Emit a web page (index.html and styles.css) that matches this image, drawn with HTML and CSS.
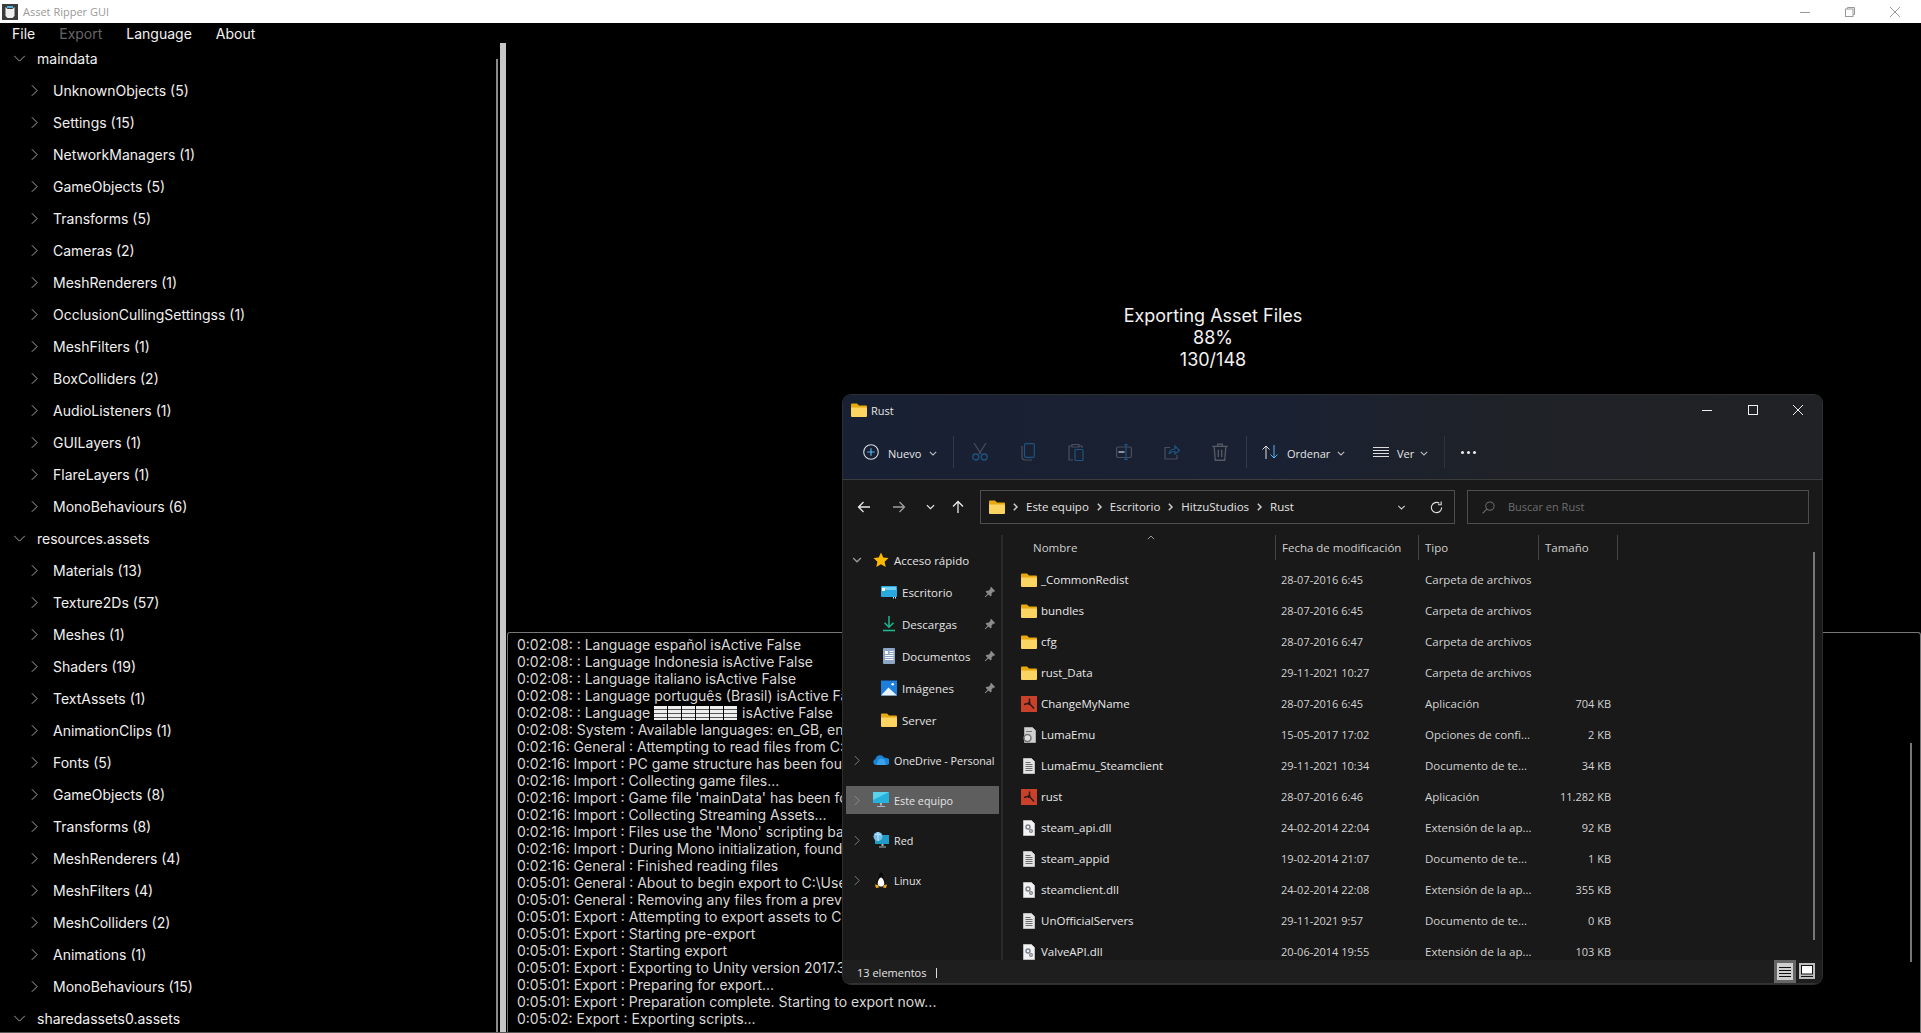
FILE: index.html
```html
<!DOCTYPE html>
<html>
	<head>
		<meta charset="UTF-8">
		<title>Asset Ripper GUI</title>
		<link rel="stylesheet" href="styles.css">
	</head>
	<body>
		<svg class="sprite" xmlns="http://www.w3.org/2000/svg">
			<symbol id="chev-r" viewBox="0 0 8 14"><path d="M1 1l6 6-6 6" fill="none" stroke="currentColor" stroke-width="1"/></symbol>
			<symbol id="chev-d" viewBox="0 0 14 8"><path d="M1 1l6 6 6-6" fill="none" stroke="currentColor" stroke-width="1"/></symbol>
			<symbol id="mini-d" viewBox="0 0 8 5"><path d="M.8.8L4 4l3.200-3.200" fill="none" stroke="currentColor" stroke-width="1.100"/></symbol>
			<symbol id="mini-r" viewBox="0 0 5 8"><path d="M.8.8L4 4 .8 7.200" fill="none" stroke="currentColor" stroke-width="1.500"/></symbol>
			<symbol id="folder" viewBox="0 0 16 14"><path d="M0 1.500Q0 .5 1 .5h5l2 2h7q1 0 1 1V6H0z" fill="#e8a90e"/><path d="M0 4.500h15q1 0 1 1V13q0 1-1 1H1q-1 0-1-1z" fill="#fcd462"/></symbol>
			<symbol id="app" viewBox="0 0 16 16"><rect width="16" height="16" fill="#c9402b"/><path d="M8.500 2.500v4.500M3 8.500l5-1.500 5 5.500" fill="none" stroke="#2a1a18" stroke-width="1.500"/><circle cx="8" cy="7.500" r="1.500" fill="#2a1a18"/></symbol>
			<symbol id="doc" viewBox="0 0 12 16"><path d="M.5.5h8l3 3v12H.5z" fill="#e4e4e4" stroke="#bdbdbd"/><path d="M2.500 4.500h5M2.500 6.500h7M2.500 8.500h7M2.500 10.500h7M2.500 12.500h7" stroke="#6c6c6c"/></symbol>
			<symbol id="dll" viewBox="0 0 12 16"><path d="M.5.5h8l3 3v12H.5z" fill="#f2f2f2" stroke="#bdbdbd"/><circle cx="5" cy="7" r="2" fill="none" stroke="#77808a" stroke-width="1.400"/><circle cx="8" cy="11" r="1.400" fill="none" stroke="#77808a" stroke-width="1.200"/></symbol>
			<symbol id="conf" viewBox="0 0 14 16"><path d="M2.500.5h8l3 3v12h-11z" fill="#d0d0d0" stroke="#aaa"/><circle cx="5.500" cy="11" r="3.500" fill="#e0e0e0" stroke="#777" stroke-width="1.500"/><path d="M4 4.500h6" stroke="#777"/></symbol>
			<symbol id="star" viewBox="0 0 16 16"><path d="M8 .5l2.300 5 5.200.6-3.900 3.600 1.100 5.300L8 12.300 3.300 15l1.100-5.300L.5 6.100l5.200-.6z" fill="#fcb900"/></symbol>
			<symbol id="pin" viewBox="0 0 12 12"><path d="M7 .8l4.200 4.200-1 .8-.7-.3-2 2 .1 1.900-1 1-2-2L1.300 11.300l-.6-.6L3.600 7.700l-2-2 1-1 1.900.1 2-2-.3-.7z" fill="#8c8c8c"/></symbol>
			<symbol id="desk" viewBox="0 0 16 14"><rect y="1" width="16" height="11" rx="1" fill="#2aa8e0"/><rect x="1" y="2" width="14" height="3" fill="#6fd2f4"/><rect x="1" y="3" width="3" height="3" fill="#fff"/><rect x="12" y="12" width="1" height="1.500" fill="#ddd"/><rect x="14" y="12" width="1" height="1.500" fill="#ddd"/></symbol>
			<symbol id="down" viewBox="0 0 14 16"><path d="M7 0v11M2.500 6.800L7 11.300l4.500-4.500" fill="none" stroke="#1fb58f" stroke-width="1.500"/><path d="M1 14.500h12" stroke="#1fb58f" stroke-width="1.600"/></symbol>
			<symbol id="docs" viewBox="0 0 12 16"><rect width="12" height="16" rx="1" fill="#8ea6c6"/><path d="M6.500 3.500h4M6.500 5.500h4M2 7.500h8.500M2 9.500h8.500M2 11.500h8.500" stroke="#fff"/><rect x="2" y="3" width="3" height="3" fill="#fff"/></symbol>
			<symbol id="pics" viewBox="0 0 15 14"><rect width="15" height="14" fill="#1c7fdc"/><path d="M0 14l7-7.500L15 14z" fill="#eaf4fd"/><circle cx="11" cy="3.500" r="1.200" fill="#fff"/></symbol>
			<symbol id="cloud" viewBox="0 0 16 10"><path d="M3 10a3 3 0 0 1-.4-5.900A4.500 4.500 0 0 1 11 2.500a3.500 3.500 0 0 1 2 .5 3.500 3.500 0 0 1 .5 7z" fill="#1b83d8"/><path d="M5 5.500a3 3 0 0 1 4.500-1.500l2 .5 1.500 5.500H3.500z" fill="#3aa3ec"/></symbol>
			<symbol id="pc" viewBox="0 0 16 16"><rect width="16" height="11" rx=".5" fill="#27b2de"/><path d="M0 0h16L0 8z" fill="#5cd3ee"/><path d="M7 11h2v2.500H7zM4 14h8v1H4z" fill="#a9b4bc"/></symbol>
			<symbol id="net" viewBox="0 0 16 16"><rect x="2" y="3" width="14" height="9" rx=".5" fill="#1f9cc6"/><path d="M8.500 12h2v2h-2zM6 14.500h7v1H6z" fill="#a9b4bc"/><circle cx="5" cy="4.500" r="4.500" fill="#76bfe8"/><path d="M2 3q3-2 6 0M5 0v9" stroke="#d8eefa" fill="none" stroke-width=".8"/></symbol>
			<symbol id="tux" viewBox="0 0 14 16"><path d="M7 0c2.200 0 2.800 2 2.800 4 0 2 3.200 5.500 2.600 8-.4 2-3 3-5.400 3s-5-1-5.400-3C1 9.500 4.200 6 4.200 4 4.200 2 4.800 0 7 0z" fill="#0a0a0a" stroke="#333" stroke-width=".5"/><path d="M7 5.500c1.500 0 3.300 3.500 3.300 6S8.500 14.500 7 14.500 3.700 14 3.700 11.500 5.500 5.500 7 5.500z" fill="#fff"/><path d="M1 12.500l3 .5 1 2.500-3 .5zM13 12.500l-3 .5-1 2.500 3 .5z" fill="#f0a818"/></symbol>
			<symbol id="cut" viewBox="0 0 16 18"><path d="M2 0l7 11M14 0L7 11" fill="none" stroke="#4a4f5a" stroke-width="1.200"/><circle cx="3.800" cy="14" r="3" fill="none" stroke="#1f5480" stroke-width="1.300"/><circle cx="12.200" cy="14" r="3" fill="none" stroke="#1f5480" stroke-width="1.300"/></symbol>
			<symbol id="copy" viewBox="0 0 14 18"><path d="M1 3v11q0 3 3 3h7" fill="none" stroke="#4a4f5a" stroke-width="1.200"/><rect x="3.500" y=".6" width="9.800" height="13.800" rx="1.500" fill="none" stroke="#1f5480" stroke-width="1.200"/></symbol>
			<symbol id="paste" viewBox="0 0 16 18"><path d="M4 3H1v14h4M11 3h3v2M4 1.500h7V4H4z" fill="none" stroke="#4a4f5a" stroke-width="1.200"/><rect x="7" y="6.500" width="8" height="11" rx="1" fill="none" stroke="#1f5480" stroke-width="1.200"/></symbol>
			<symbol id="rename" viewBox="0 0 16 16"><rect x=".6" y="3" width="14.800" height="10.500" rx="1.500" fill="none" stroke="#4a4f5a" stroke-width="1.200"/><path d="M2.500 8h6" stroke="#8a93a3" stroke-width="2"/><path d="M10 0v16M8.300.6h3.400M8.300 15.400h3.400" fill="none" stroke="#1f5480" stroke-width="1.200"/></symbol>
			<symbol id="share" viewBox="0 0 16 16"><path d="M6 3.500H1v11.500h12v-4" fill="none" stroke="#4a4f5a" stroke-width="1.200"/><path d="M5 10q1-5 6-5V2l4.500 4.500L11 10V7.500Q7 7.500 5 10z" fill="none" stroke="#1f5480" stroke-width="1.200"/></symbol>
			<symbol id="trash" viewBox="0 0 14 16"><path d="M0 3h14M5 3V1h4v2M1.800 3l1 12.300h8.400L12.200 3M5.500 6v6.500M8.500 6v6.500" fill="none" stroke="#555a63" stroke-width="1.200"/></symbol>
			<symbol id="plus" viewBox="0 0 16 16"><circle cx="8" cy="8" r="7.300" fill="none" stroke="#dcdcdc" stroke-width="1.100"/><path d="M8 4.200v7.600M4.200 8h7.600" stroke="#58b4f0" stroke-width="1.200"/></symbol>
			<symbol id="sort" viewBox="0 0 16 14"><path d="M4 14V1M.5 4.500L4 1l3.500 3.500" fill="none" stroke="#dcdcdc"/><path d="M12 0v13M8.500 9.500L12 13l3.500-3.500" fill="none" stroke="#58b4f0"/></symbol>
			<symbol id="lines" viewBox="0 0 16 11"><path d="M0 .5h16M0 3.500h16M0 6.500h16M0 9.500h16" stroke="#dcdcdc"/></symbol>
			<symbol id="back" viewBox="0 0 14 12"><path d="M13 6H1.500M6.500 1l-5 5 5 5" fill="none" stroke="currentColor" stroke-width="1.300"/></symbol>
			<symbol id="up" viewBox="0 0 12 14"><path d="M6 13V1.500M1 6.500l5-5 5 5" fill="none" stroke="#e8e8e8" stroke-width="1.300"/></symbol>
			<symbol id="refresh" viewBox="0 0 14 14"><path d="M12.500 7A5.500 5.500 0 1 1 10 2.400" fill="none" stroke="#e0e0e0" stroke-width="1.200"/><path d="M12 .5V4H8.500" fill="none" stroke="#e0e0e0" stroke-width="1.200"/></symbol>
			<symbol id="search" viewBox="0 0 14 14"><circle cx="8.500" cy="5.500" r="4.500" fill="none" stroke="#6a6a6a" stroke-width="1.100"/><path d="M5.200 8.800L.7 13.300" stroke="#6a6a6a" stroke-width="1.300"/></symbol>
		</svg>

		<div class="app">
			<div class="titlebar">
				<svg class="app-icon" viewBox="0 0 16 16"><rect width="16" height="16" fill="#3c3c3c"/><path d="M3.500 3l2 2h5l2-2v9l-2 2h-5l-2-2z" fill="#efefef"/><path d="M5 2h6v2H5z" fill="#4fb0d8"/></svg>
				<span class="app-name">Asset Ripper GUI</span>
				<div class="caption">
					<svg viewBox="0 0 10 10"><path d="M0 5.500h10" stroke="#999"/></svg>
					<svg viewBox="0 0 10 10"><rect x=".5" y="2" width="7.500" height="7.500" fill="none" stroke="#999"/><path d="M2.500 2V.5h7v7H8" fill="none" stroke="#999"/></svg>
					<svg viewBox="0 0 10 10"><path d="M0 0l10 10M10 0L0 10" stroke="#999"/></svg>
				</div>
			</div>

			<div class="menu">
				<span>File</span>
				<span class="off">Export</span>
				<span>Language</span>
				<span>About</span>
			</div>

			<div class="main">
				<div class="tree">
					<div class="node top"><svg class="ch-d"><use href="#chev-d"/></svg>maindata</div>
					<div class="node"><svg class="ch-r"><use href="#chev-r"/></svg>UnknownObjects (5)</div>
					<div class="node"><svg class="ch-r"><use href="#chev-r"/></svg>Settings (15)</div>
					<div class="node"><svg class="ch-r"><use href="#chev-r"/></svg>NetworkManagers (1)</div>
					<div class="node"><svg class="ch-r"><use href="#chev-r"/></svg>GameObjects (5)</div>
					<div class="node"><svg class="ch-r"><use href="#chev-r"/></svg>Transforms (5)</div>
					<div class="node"><svg class="ch-r"><use href="#chev-r"/></svg>Cameras (2)</div>
					<div class="node"><svg class="ch-r"><use href="#chev-r"/></svg>MeshRenderers (1)</div>
					<div class="node"><svg class="ch-r"><use href="#chev-r"/></svg>OcclusionCullingSettingss (1)</div>
					<div class="node"><svg class="ch-r"><use href="#chev-r"/></svg>MeshFilters (1)</div>
					<div class="node"><svg class="ch-r"><use href="#chev-r"/></svg>BoxColliders (2)</div>
					<div class="node"><svg class="ch-r"><use href="#chev-r"/></svg>AudioListeners (1)</div>
					<div class="node"><svg class="ch-r"><use href="#chev-r"/></svg>GUILayers (1)</div>
					<div class="node"><svg class="ch-r"><use href="#chev-r"/></svg>FlareLayers (1)</div>
					<div class="node"><svg class="ch-r"><use href="#chev-r"/></svg>MonoBehaviours (6)</div>
					<div class="node top"><svg class="ch-d"><use href="#chev-d"/></svg>resources.assets</div>
					<div class="node"><svg class="ch-r"><use href="#chev-r"/></svg>Materials (13)</div>
					<div class="node"><svg class="ch-r"><use href="#chev-r"/></svg>Texture2Ds (57)</div>
					<div class="node"><svg class="ch-r"><use href="#chev-r"/></svg>Meshes (1)</div>
					<div class="node"><svg class="ch-r"><use href="#chev-r"/></svg>Shaders (19)</div>
					<div class="node"><svg class="ch-r"><use href="#chev-r"/></svg>TextAssets (1)</div>
					<div class="node"><svg class="ch-r"><use href="#chev-r"/></svg>AnimationClips (1)</div>
					<div class="node"><svg class="ch-r"><use href="#chev-r"/></svg>Fonts (5)</div>
					<div class="node"><svg class="ch-r"><use href="#chev-r"/></svg>GameObjects (8)</div>
					<div class="node"><svg class="ch-r"><use href="#chev-r"/></svg>Transforms (8)</div>
					<div class="node"><svg class="ch-r"><use href="#chev-r"/></svg>MeshRenderers (4)</div>
					<div class="node"><svg class="ch-r"><use href="#chev-r"/></svg>MeshFilters (4)</div>
					<div class="node"><svg class="ch-r"><use href="#chev-r"/></svg>MeshColliders (2)</div>
					<div class="node"><svg class="ch-r"><use href="#chev-r"/></svg>Animations (1)</div>
					<div class="node"><svg class="ch-r"><use href="#chev-r"/></svg>MonoBehaviours (15)</div>
					<div class="node top"><svg class="ch-d"><use href="#chev-d"/></svg>sharedassets0.assets</div>
				</div>
				<div class="tree-scroll"></div>
				<div class="splitter"></div>

				<div class="panel">
					<div class="progress">
						<div>Exporting Asset Files</div>
						<div>88%</div>
						<div>130/148</div>
					</div>
					<div class="log">
						<div>0:02:08: : Language español isActive False</div>
						<div>0:02:08: : Language Indonesia isActive False</div>
						<div>0:02:08: : Language italiano isActive False</div>
						<div>0:02:08: : Language português (Brasil) isActive False</div>
						<div>0:02:08: : Language <i class="tofu"></i><i class="tofu"></i><i class="tofu"></i><i class="tofu"></i><i class="tofu"></i><i class="tofu"></i> isActive False</div>
						<div>0:02:08: System : Available languages: en_GB, en_US</div>
						<div>0:02:16: General : Attempting to read files from C:\Users</div>
						<div>0:02:16: Import : PC game structure has been found</div>
						<div>0:02:16: Import : Collecting game files...</div>
						<div>0:02:16: Import : Game file 'mainData' has been found</div>
						<div>0:02:16: Import : Collecting Streaming Assets...</div>
						<div>0:02:16: Import : Files use the 'Mono' scripting backend</div>
						<div>0:02:16: Import : During Mono initialization, found</div>
						<div>0:02:16: General : Finished reading files</div>
						<div>0:05:01: General : About to begin export to C:\Users</div>
						<div>0:05:01: General : Removing any files from a previous</div>
						<div>0:05:01: Export : Attempting to export assets to C:\Users</div>
						<div>0:05:01: Export : Starting pre-export</div>
						<div>0:05:01: Export : Starting export</div>
						<div>0:05:01: Export : Exporting to Unity version 2017.3</div>
						<div>0:05:01: Export : Preparing for export...</div>
						<div>0:05:01: Export : Preparation complete. Starting to export now...</div>
						<div>0:05:02: Export : Exporting scripts...</div>
						<div class="log-thumb"></div>
					</div>
				</div>
			</div>

			<!-- ventana del explorador encima de la app -->
			<div class="explorer">
				<div class="head">
					<div class="ex-title">
						<svg class="i16-14"><use href="#folder"/></svg>
						<span>Rust</span>
						<div class="ex-caption">
							<svg viewBox="0 0 10 10"><path d="M0 5.500h10" stroke="#eee"/></svg>
							<svg viewBox="0 0 10 10"><rect x=".5" y=".5" width="9" height="9" fill="none" stroke="#eee"/></svg>
							<svg viewBox="0 0 10 10"><path d="M0 0l10 10M10 0L0 10" stroke="#eee"/></svg>
						</div>
					</div>
					<div class="toolbar">
						<svg class="tb-new"><use href="#plus"/></svg>
						<span class="tb-label w-nuevo">Nuevo</span>
						<svg class="mini"><use href="#mini-d"/></svg>
						<i class="tb-sep sep-a"></i>
						<div class="tb-cell"><svg><use href="#cut"/></svg></div>
						<div class="tb-cell"><svg><use href="#copy"/></svg></div>
						<div class="tb-cell"><svg><use href="#paste"/></svg></div>
						<div class="tb-cell"><svg><use href="#rename"/></svg></div>
						<div class="tb-cell"><svg><use href="#share"/></svg></div>
						<div class="tb-cell"><svg><use href="#trash"/></svg></div>
						<i class="tb-sep sep-b"></i>
						<svg class="tb-sort"><use href="#sort"/></svg>
						<span class="tb-label w-ordenar">Ordenar</span>
						<svg class="mini"><use href="#mini-d"/></svg>
						<svg class="tb-lines"><use href="#lines"/></svg>
						<span class="tb-label w-ver">Ver</span>
						<svg class="mini"><use href="#mini-d"/></svg>
						<i class="tb-sep sep-c"></i>
						<div class="tb-dots"><i></i><i></i><i></i></div>
					</div>
				</div>

				<div class="navrow">
					<div class="nav-btns">
						<svg class="nav-back"><use href="#back"/></svg>
						<svg class="nav-fwd"><use href="#back"/></svg>
						<svg class="nav-hist"><use href="#mini-d"/></svg>
						<svg class="nav-up"><use href="#up"/></svg>
					</div>
					<div class="address">
						<svg class="i16-14"><use href="#folder"/></svg>
						<svg class="crumb-sep"><use href="#mini-r"/></svg>
						<span>Este equipo</span>
						<svg class="crumb-sep"><use href="#mini-r"/></svg>
						<span>Escritorio</span>
						<svg class="crumb-sep"><use href="#mini-r"/></svg>
						<span>HitzuStudios</span>
						<svg class="crumb-sep"><use href="#mini-r"/></svg>
						<span>Rust</span>
						<svg class="addr-chev"><use href="#mini-d"/></svg>
						<svg class="addr-refresh"><use href="#refresh"/></svg>
					</div>
					<div class="searchbox">
						<svg><use href="#search"/></svg>
						<span>Buscar en Rust</span>
					</div>
				</div>

				<div class="ex-body">
					<div class="sidebar">
						<div class="side-row"><svg class="s-chev open"><use href="#mini-d"/></svg><svg class="s-icon"><use href="#star"/></svg><span>Acceso rápido</span></div>
						<div class="side-row sub"><svg class="s-icon"><use href="#desk"/></svg><span>Escritorio</span><svg class="pin"><use href="#pin"/></svg></div>
						<div class="side-row sub"><svg class="s-icon"><use href="#down"/></svg><span>Descargas</span><svg class="pin"><use href="#pin"/></svg></div>
						<div class="side-row sub"><svg class="s-icon"><use href="#docs"/></svg><span>Documentos</span><svg class="pin"><use href="#pin"/></svg></div>
						<div class="side-row sub"><svg class="s-icon"><use href="#pics"/></svg><span>Imágenes</span><svg class="pin"><use href="#pin"/></svg></div>
						<div class="side-row sub"><svg class="s-icon"><use href="#folder"/></svg><span>Server</span></div>
						<div class="side-row root"><svg class="s-chev"><use href="#chev-r"/></svg><svg class="s-icon"><use href="#cloud"/></svg><span>OneDrive - Personal</span></div>
						<div class="side-row root selected"><svg class="s-chev"><use href="#chev-r"/></svg><svg class="s-icon"><use href="#pc"/></svg><span>Este equipo</span></div>
						<div class="side-row root"><svg class="s-chev"><use href="#chev-r"/></svg><svg class="s-icon"><use href="#net"/></svg><span>Red</span></div>
						<div class="side-row root"><svg class="s-chev"><use href="#chev-r"/></svg><svg class="s-icon"><use href="#tux"/></svg><span>Linux</span></div>
					</div>
					<div class="files">
						<div class="file-head">
							<div class="fh">Nombre<svg class="sort-caret" viewBox="0 0 8 5"><path d="M.8 4.200L4 1l3.200 3.200" fill="none" stroke="#999"/></svg></div>
							<div class="fh">Fecha de modificación</div>
							<div class="fh">Tipo</div>
							<div class="fh last">Tamaño</div>
						</div>
						<div class="file"><svg class="f-ico"><use href="#folder"/></svg><span>_CommonRedist</span><span>28-07-2016 6:45</span><span>Carpeta de archivos</span><span></span></div>
						<div class="file"><svg class="f-ico"><use href="#folder"/></svg><span>bundles</span><span>28-07-2016 6:45</span><span>Carpeta de archivos</span><span></span></div>
						<div class="file"><svg class="f-ico"><use href="#folder"/></svg><span>cfg</span><span>28-07-2016 6:47</span><span>Carpeta de archivos</span><span></span></div>
						<div class="file"><svg class="f-ico"><use href="#folder"/></svg><span>rust_Data</span><span>29-11-2021 10:27</span><span>Carpeta de archivos</span><span></span></div>
						<div class="file"><svg class="f-ico"><use href="#app"/></svg><span>ChangeMyName</span><span>28-07-2016 6:45</span><span>Aplicación</span><span>704 KB</span></div>
						<div class="file"><svg class="f-ico"><use href="#conf"/></svg><span>LumaEmu</span><span>15-05-2017 17:02</span><span>Opciones de confi...</span><span>2 KB</span></div>
						<div class="file"><svg class="f-ico"><use href="#doc"/></svg><span>LumaEmu_Steamclient</span><span>29-11-2021 10:34</span><span>Documento de te...</span><span>34 KB</span></div>
						<div class="file"><svg class="f-ico"><use href="#app"/></svg><span>rust</span><span>28-07-2016 6:46</span><span>Aplicación</span><span>11.282 KB</span></div>
						<div class="file"><svg class="f-ico"><use href="#dll"/></svg><span>steam_api.dll</span><span>24-02-2014 22:04</span><span>Extensión de la ap...</span><span>92 KB</span></div>
						<div class="file"><svg class="f-ico"><use href="#doc"/></svg><span>steam_appid</span><span>19-02-2014 21:07</span><span>Documento de te...</span><span>1 KB</span></div>
						<div class="file"><svg class="f-ico"><use href="#dll"/></svg><span>steamclient.dll</span><span>24-02-2014 22:08</span><span>Extensión de la ap...</span><span>355 KB</span></div>
						<div class="file"><svg class="f-ico"><use href="#doc"/></svg><span>UnOfficialServers</span><span>29-11-2021 9:57</span><span>Documento de te...</span><span>0 KB</span></div>
						<div class="file"><svg class="f-ico"><use href="#dll"/></svg><span>ValveAPI.dll</span><span>20-06-2014 19:55</span><span>Extensión de la ap...</span><span>103 KB</span></div>
						<div class="files-thumb"></div>
					</div>
				</div>

				<div class="status">
					<span>13 elementos</span>
					<i class="st-sep"></i>
					<div class="view-btns">
						<div class="view-btn on"><svg viewBox="0 0 12 10"><path d="M0 .5h12M0 3.500h12M0 6.500h12M0 9.500h12" stroke="#111"/></svg></div>
						<div class="view-btn"><svg viewBox="0 0 12 12"><rect x=".5" y=".5" width="11" height="8.500" fill="#fff" stroke="#111"/><path d="M0 11.500h12" stroke="#111"/></svg></div>
					</div>
				</div>
			</div>
		</div>
	</body>
</html>
```

FILE: styles.css
```css
/*reset*/
* {
	margin: 0px;
	padding: 0px;
	box-sizing: border-box;
}
html, body {
	height: 100%;
	overflow: hidden;
	background: #000;
}
.sprite {
	position: absolute;
	width: 0;
	height: 0;
}
.app {
	position: relative;
	height: 1033px;
	display: flex;
	flex-direction: column;
	overflow: hidden;
	background: #000;
	color: #eee;
	font-family: Inter, "Liberation Sans", sans-serif;
	font-size: 14px;
}

/*ventana principal*/
.titlebar {
	height: 23px;
	flex: none;
	background: #fff;
	display: flex;
	align-items: center;
	padding-left: 2px;
}
.app-icon {
	width: 16px;
	height: 16px;
}
.app-name {
	margin-left: 5px;
	color: #999;
	font-family: "Open Sans", sans-serif;
	font-size: 11px;
}
.caption {
	margin-left: auto;
	display: flex;
	gap: 35px;
	padding-right: 21px;
}
.caption svg {
	width: 10px;
	height: 10px;
}
.menu {
	height: 19px;
	flex: none;
	display: flex;
	gap: 24px;
	padding-left: 12px;
	line-height: 22px;
	color: #f2f2f2;
}
.menu .off {
	color: #666;
}
.main {
	flex: 1;
	min-height: 0;
	display: flex;
	border-bottom: 1px solid #555;
}
.tree {
	width: 496px;
	flex: none;
	overflow: hidden;
}
.node {
	height: 32px;
	display: flex;
	align-items: center;
	padding-left: 31px;
	color: #f0f0f0;
	white-space: nowrap;
}
.node.top {
	padding-left: 13px;
}
.ch-r {
	width: 7px;
	height: 13px;
	margin-right: 15px;
	color: #bbb;
}
.ch-d {
	width: 13px;
	height: 7px;
	margin-right: 11px;
	color: #bbb;
}
.tree-scroll {
	width: 2px;
	margin: 17px 2px 0 0;
	background: #8a8a8a;
}
.splitter {
	width: 6px;
	margin: 1px 1px 0 0;
	background: #c8c8c8;
}
.panel {
	flex: 1;
	min-width: 0;
	display: flex;
	flex-direction: column;
}
.progress {
	height: 590px;
	flex: none;
	padding: 2px 2px 0 0;
	display: flex;
	flex-direction: column;
	align-items: center;
	justify-content: center;
	font-size: 18px;
	line-height: 22px;
	color: #f2f2f2;
}
.log {
	position: relative;
	flex: 1;
	padding: 3px 9px;
	border: 1px solid #777;
	border-bottom: 0;
	border-radius: 3px 3px 0 0;
	overflow: hidden;
	line-height: 17px;
	color: #d8d8d8;
	white-space: nowrap;
}
.tofu {
	display: inline-block;
	width: 13px;
	height: 14px;
	margin-right: 1px;
	vertical-align: -2px;
	background: repeating-linear-gradient(#eee 0, #eee 3px, #555 3px, #555 4px);
}
.log-thumb {
	position: absolute;
	left: 1402px;
	top: 110px;
	width: 2px;
	height: 219px;
	background: #777;
}

/*explorador, flota encima*/
.explorer {
	position: absolute;
	left: 843px;
	top: 395px;
	width: 979px;
	height: 589px;
	display: flex;
	flex-direction: column;
	overflow: hidden;
	border-radius: 8px;
	background: #191919;
	box-shadow: 0 0 0 1px #2e2e2e;
	font-family: "Open Sans", sans-serif;
	font-size: 11.5px;
	color: #e4e4e4;
}
.i16-14 {
	width: 16px;
	height: 14px;
	flex: none;
}
.head {
	height: 85px;
	flex: none;
	background: linear-gradient(90deg, #182033 0%, #1a2132 45%, #1f2227 68%, #202225 100%);
	border-bottom: 1px solid #3c3c3c;
}
.ex-title {
	height: 30px;
	display: flex;
	align-items: center;
	padding-left: 8px;
}
.ex-title span {
	margin-left: 4px;
	font-size: 11px;
}
.ex-caption {
	margin-left: auto;
	display: flex;
	gap: 35.5px;
	padding-right: 19px;
}
.ex-caption svg {
	width: 10px;
	height: 10px;
}
.toolbar {
	height: 54px;
	display: flex;
	align-items: center;
	padding: 2px 0 0 20px;
}
.tb-new {
	width: 16px;
	height: 16px;
	margin-top: -2px;
}
.tb-label {
	margin-left: 9px;
	flex: none;
	font-size: 11px;
}
.w-nuevo {
	width: 36px;
}
.w-ordenar {
	width: 45px;
}
.w-ver {
	width: 18px;
	margin-left: 8px;
}
.mini {
	width: 8px;
	height: 5px;
	flex: none;
	margin-left: 5px;
	color: #bbb;
}
.tb-sep {
	width: 1px;
	height: 32px;
	margin-top: -2px;
	background: #33394a;
	flex: none;
}
.sep-a {
	margin-left: 16px;
	margin-right: 2px;
}
.sep-b {
	margin-left: 2px;
}
.sep-c {
	margin-left: 16px;
	background: #333;
}
.tb-cell {
	width: 48px;
	margin-top: -2px;
	display: flex;
	justify-content: center;
}
.tb-cell svg {
	width: 16px;
	height: 18px;
}
.tb-sort {
	width: 16px;
	height: 14px;
	margin-top: -2px;
	margin-left: 15px;
}
.tb-lines {
	width: 16px;
	height: 11px;
	margin-top: -2px;
	margin-left: 28px;
}
.tb-dots {
	display: flex;
	gap: 3px;
	margin-top: -2px;
	margin-left: 16px;
}
.tb-dots i {
	width: 3px;
	height: 3px;
	border-radius: 50%;
	background: #eee;
}
.navrow {
	height: 55px;
	flex: none;
	display: flex;
	align-items: flex-start;
	padding: 10px 0 0 6px;
}
.nav-btns {
	height: 34px;
	display: grid;
	grid-template-columns: 30px 40px 22px 34px;
	align-items: center;
	justify-items: center;
	color: #e8e8e8;
}
.nav-back, .nav-fwd {
	width: 14px;
	height: 12px;
}
.nav-fwd {
	transform: scaleX(-1);
	color: #a0a0a0;
}
.nav-hist {
	width: 9px;
	height: 6px;
}
.nav-up {
	width: 12px;
	height: 14px;
}
.address, .searchbox {
	height: 34px;
	display: flex;
	align-items: center;
	border: 1px solid #4e4e4e;
	line-height: 14px;
}
.address span, .searchbox span {
	margin-top: -1px;
}
.address {
	width: 475px;
	margin-left: 5px;
	padding: 0 11px 0 8px;
}
.crumb-sep {
	width: 21px;
	height: 8px;
	flex: none;
	color: #ccc;
}
.addr-chev {
	width: 9px;
	height: 5px;
	margin-left: auto;
	color: #ccc;
}
.addr-refresh {
	width: 13px;
	height: 13px;
	margin-left: 24px;
}
.searchbox {
	width: 342px;
	margin-left: 12px;
	padding-left: 14px;
	color: #6e6e6e;
	font-size: 11px;
}
.searchbox svg {
	width: 13px;
	height: 13px;
	margin-right: 13px;
}
.ex-body {
	flex: 1;
	min-height: 0;
	display: flex;
}
.sidebar {
	width: 160px;
	flex: none;
	padding: 9px 2px 0 3px;
	border-right: 2px solid #2a2a2a;
	overflow: hidden;
}
.side-row {
	height: 32px;
	display: flex;
	align-items: center;
	white-space: nowrap;
	overflow: hidden;
}
.side-row.sub {
	padding-left: 35px;
}
.side-row.root {
	margin-top: 8px;
	font-size: 10.8px;
}
.side-row.selected {
	background: #5e5e5e;
	background-clip: padding-box;
	border-top: 2px solid transparent;
	border-bottom: 2px solid transparent;
}
.s-chev {
	width: 6px;
	height: 11px;
	flex: none;
	margin: 0 8px;
	color: #999;
}
.s-chev.open {
	width: 10px;
	height: 6px;
	margin: 0 6px;
}
.s-icon {
	width: 16px;
	height: 16px;
	flex: none;
	margin-left: 5px;
	margin-right: 5px;
}
.sub .s-icon {
	margin-left: 0;
}
.pin {
	width: 12px;
	height: 12px;
	margin-left: auto;
	margin-right: 3px;
}
.files {
	position: relative;
	flex: 1;
	min-width: 0;
	overflow: hidden;
}
.file-head {
	height: 25px;
	margin-bottom: 4px;
	padding-left: 30px;
	display: grid;
	grid-template-columns: 242px 143px 120px 80px;
}
.fh {
	position: relative;
	line-height: 25px;
	padding-left: 6px;
	border-left: 1px solid #444;
	color: #d0d0d0;
}
.fh:first-child {
	padding-left: 0;
	border-left: 0;
}
.fh.last {
	border-right: 1px solid #444;
}
.sort-caret {
	position: absolute;
	left: 114px;
	top: 0;
	width: 8px;
	height: 5px;
}
.file {
	height: 31px;
	padding-left: 18px;
	display: grid;
	grid-template-columns: 20px 240px 144px 113px 73px;
	align-items: center;
	color: #d2d2d2;
	white-space: nowrap;
}
.file span:nth-of-type(1) {
	color: #e8e8e8;
}
.file span:nth-of-type(2) {
	font-size: 11px;
}
.file span:last-child {
	text-align: right;
	font-size: 11px;
}
.f-ico {
	width: 16px;
	height: 16px;
}
.files-thumb {
	position: absolute;
	right: 7px;
	top: 17px;
	width: 2px;
	height: 388px;
	background: #777;
}
.status {
	height: 24px;
	flex: none;
	display: flex;
	align-items: center;
	padding: 2px 0 0 14px;
	background: #1e1e1e;
	border-bottom: 1px solid #333;
	font-size: 11px;
}
.st-sep {
	width: 1px;
	height: 10px;
	margin-left: 10px;
	background: #ddd;
}
.view-btns {
	margin-left: auto;
	margin-top: -2px;
	display: flex;
	gap: 3px;
	padding-right: 7px;
}
.view-btn {
	width: 16px;
	height: 16px;
	margin-top: 3px;
	display: flex;
	align-items: center;
	justify-content: center;
	background: #bdbdbd;
}
.view-btn.on {
	width: 22px;
	height: 23px;
	margin-top: 0;
	background: #cfcfcf;
	border: 3px solid #666;
}
.view-btn svg {
	width: 12px;
	height: 12px;
}
```
